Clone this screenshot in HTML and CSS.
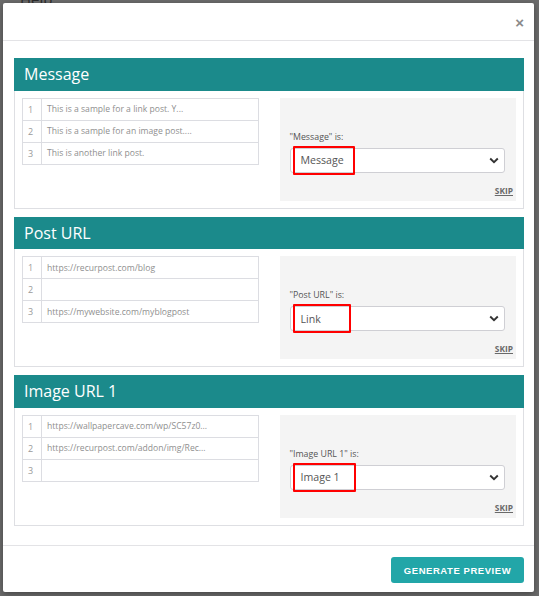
FILE: index.html
```html
<!DOCTYPE html>
<html>
<head>
<meta charset="utf-8">
<link rel="stylesheet" href="styles.css">
</head>
<body>
<div class="page">
  <div class="page-title">Help</div>
</div>
<div class="modal">
  <div class="modal-header">
    <span class="close">&times;</span>
  </div>
  <div class="modal-body">
    <section class="field">
      <h2 class="field-title">Message</h2>
      <div class="field-body">
        <table class="samples">
          <tr><td class="num">1</td><td>This is a sample for a link post. Y...</td></tr>
          <tr><td class="num">2</td><td>This is a sample for an image post....</td></tr>
          <tr><td class="num">3</td><td>This is another link post.</td></tr>
        </table>
        <div class="mapper">
          <div class="label">"Message" is:</div>
          <div class="select">
            <span class="value">Message</span>
            <span class="mark mark-msg"></span>
            <svg class="chev" width="10" height="7" viewBox="0 0 10 7"><polyline points="1.2,1.5 5,5.2 8.8,1.5" fill="none" stroke="#333" stroke-width="1.9"/></svg>
          </div>
          <div class="skip">SKIP</div>
        </div>
      </div>
    </section>
    <section class="field">
      <h2 class="field-title">Post URL</h2>
      <div class="field-body">
        <table class="samples">
          <tr><td class="num">1</td><td>https://recurpost.com/blog</td></tr>
          <tr><td class="num">2</td><td></td></tr>
          <tr><td class="num">3</td><td>https://mywebsite.com/myblogpost</td></tr>
        </table>
        <div class="mapper">
          <div class="label">"Post URL" is:</div>
          <div class="select">
            <span class="value">Link</span>
            <span class="mark mark-link"></span>
            <svg class="chev" width="10" height="7" viewBox="0 0 10 7"><polyline points="1.2,1.5 5,5.2 8.8,1.5" fill="none" stroke="#333" stroke-width="1.9"/></svg>
          </div>
          <div class="skip">SKIP</div>
        </div>
      </div>
    </section>
    <section class="field">
      <h2 class="field-title">Image URL 1</h2>
      <div class="field-body">
        <table class="samples">
          <tr><td class="num">1</td><td>https://wallpapercave.com/wp/SC57z0...</td></tr>
          <tr><td class="num">2</td><td>https://recurpost.com/addon/img/Rec...</td></tr>
          <tr><td class="num">3</td><td></td></tr>
        </table>
        <div class="mapper">
          <div class="label">"Image URL 1" is:</div>
          <div class="select">
            <span class="value">Image 1</span>
            <span class="mark mark-img"></span>
            <svg class="chev" width="10" height="7" viewBox="0 0 10 7"><polyline points="1.2,1.5 5,5.2 8.8,1.5" fill="none" stroke="#333" stroke-width="1.9"/></svg>
          </div>
          <div class="skip">SKIP</div>
        </div>
      </div>
    </section>
  </div>
  <div class="modal-footer">
    <button class="btn">GENERATE PREVIEW</button>
  </div>
</div>
</body>
</html>
```
FILE: styles.css
```css
html, body {
  margin: 0;
  padding: 0;
}
body {
  background: #6b6b6b;
  font-family: "Open Sans", "Liberation Sans", sans-serif;
  width: 539px;
  height: 596px;
  overflow: hidden;
  position: relative;
}
.page {
  padding: 0 0 0 20px;
}
.page-title {
  margin-top: -10px;
  font-size: 15px;
  color: #2a2a2a;
  line-height: 18px;
}
.modal {
  position: absolute;
  left: 3px;
  top: 3px;
  width: 531px;
  height: 589px;
  background: #fff;
  border-radius: 2px;
  box-shadow: 0 2px 6px rgba(0,0,0,0.35);
  display: flex;
  flex-direction: column;
}
.modal-header {
  height: 37px;
  border-bottom: 1px solid #e3e3e6;
  display: flex;
  justify-content: flex-end;
  align-items: center;
  padding-right: 10px;
}
.close {
  font-family: "Liberation Sans", sans-serif;
  font-size: 15px;
  font-weight: bold;
  color: #8a8a8a;
  line-height: 1;
  margin-top: 1px;
}
.modal-body {
  padding: 17px 10px 18px 11px;
  display: flex;
  flex-direction: column;
  gap: 8px;
}
.field-title {
  margin: 0;
  height: 32.5px;
  background: #1b8a8b;
  color: #fff;
  font-weight: normal;
  font-size: 16px;
  line-height: 32.5px;
  padding-left: 10px;
}
.field-body {
  border: 1px solid #dedfe3;
  border-top: none;
  padding: 7px;
  display: grid;
  grid-template-columns: minmax(0, 1fr) minmax(0, 1fr);
  column-gap: 21px;
  height: 103px;
}
.samples {
  border-collapse: collapse;
  width: 100%;
  align-self: start;
}
.samples td {
  border: 1px solid #dcdde2;
  height: 21px;
  padding: 0 0 0 5px;
  font-size: 8.6px;
  color: #8f8f8f;
  white-space: nowrap;
}
.samples td.num {
  width: 13px;
  padding-left: 5px;
  color: #9a9a9a;
  font-size: 9px;
}
.mapper {
  background: #f4f4f4;
  display: flex;
  flex-direction: column;
  justify-content: flex-end;
  padding: 0 3px 5px 10px;
  min-width: 0;
}
.label {
  font-size: 8.8px;
  color: #555;
  margin-bottom: 5px;
}
.select {
  position: relative;
  height: 23px;
  border: 1px solid #cfcfd4;
  border-radius: 3px;
  background: #fff;
  display: flex;
  align-items: center;
  padding-left: 10px;
  margin-right: 8px;
}
.value {
  font-size: 10.6px;
  color: #555;
  flex: 1;
}
.chev {
  margin-right: 5px;
}
.mark {
  position: absolute;
  left: 2px;
  top: -3px;
  height: 25px;
  border: 2px solid #ff0000;
  border-radius: 1px;
}
.mark-msg { width: 58px; }
.mark-link { width: 54px; }
.mark-img { width: 59px; }
.skip {
  align-self: flex-end;
  font-size: 8.4px;
  font-weight: bold;
  color: #6a6a6a;
  text-decoration: underline;
  margin-top: 13px;
  line-height: 10px;
}
.modal-footer {
  border-top: 1px solid #e3e3e6;
  margin-top: auto;
  padding: 11px 10px 9px 0;
  display: flex;
  justify-content: flex-end;
}
.btn {
  width: 133px;
  height: 26px;
  background: #22a6a8;
  color: #fff;
  border: none;
  border-radius: 3px;
  font-family: "Liberation Sans", Arial, sans-serif;
  font-weight: bold;
  font-size: 9.5px;
  letter-spacing: 0.55px;
  padding: 0;
}
```
